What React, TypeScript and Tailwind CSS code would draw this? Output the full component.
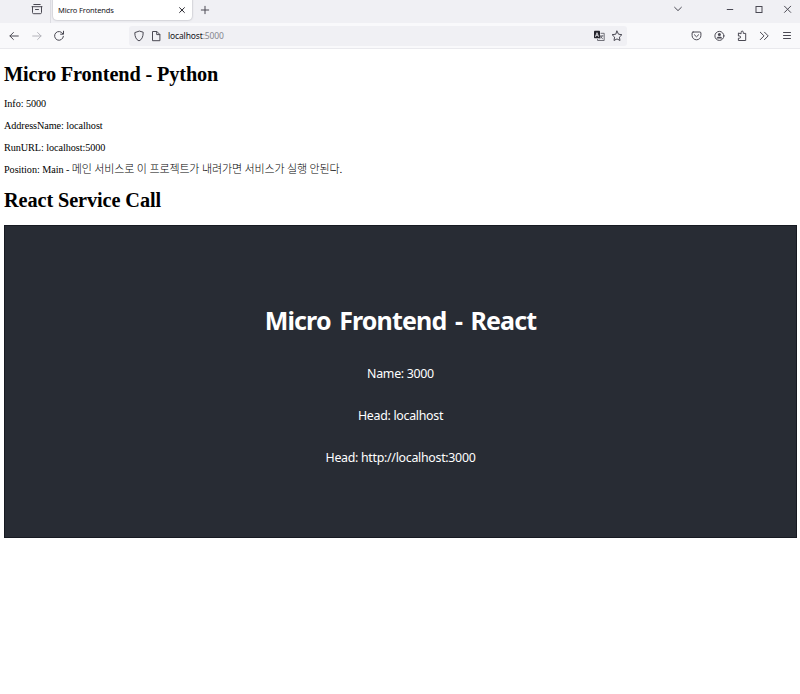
import React from "react";

type IconProps = { className?: string; children: React.ReactNode; size?: number; stroke?: string; width?: number };

function Icon({ className = "", children, size = 12, stroke = "#4a4953", width = 1 }: IconProps) {
  return (
    <svg className={`block shrink-0 ${className}`} width={size} height={size} viewBox="0 0 12 12" fill="none" stroke={stroke} strokeWidth={width} strokeLinecap="round" strokeLinejoin="round">
      {children}
    </svg>
  );
}

function TabBar() {
  return (
    <div className="flex h-[23px] items-start bg-[#f0f0f4]">
      <Icon className="ml-[31px] mt-[3px]">
        <path d="M2.8 1.5h6.4M1 3.7h10M1.5 3.7v5.8a1.2 1.2 0 0 0 1.2 1.2h6.6a1.2 1.2 0 0 0 1.2-1.2V3.7M4.5 6.5h3" />
      </Icon>
      <div className="ml-[7px] h-[23px] w-px bg-[#dcdce2]" />
      <div className="-mt-1 ml-[2px] flex h-6 w-[139px] items-center rounded bg-white pt-[3px] shadow-[0_0_2px_rgba(80,80,95,0.55)]">
        <span className="ml-[5px] whitespace-nowrap font-['Noto_Sans','Open_Sans',sans-serif] text-[7.5px] leading-[12px] tracking-[-0.12px] text-[#15141a]">Micro Frontends</span>
        <Icon className="ml-auto mr-[4px]"><path d="M3.6 3.7l4.8 4.8M8.4 3.7L3.6 8.5" stroke="#25242c" /></Icon>
      </div>
      <Icon className="ml-[7px] mt-[4px]"><path d="M6 2.3v7.4M2.3 6h7.4" /></Icon>
      <Icon className="ml-auto mt-[3px]"><path d="M2.6 4.3L6 7.6l3.4-3.3" /></Icon>
      <Icon className="ml-[40px] mt-[3px]"><path d="M3.2 6.5h5.6" /></Icon>
      <Icon className="ml-[17px] mt-[3px]"><rect x="3" y="3.5" width="6" height="6" strokeLinejoin="miter" /></Icon>
      <Icon className="ml-[17px] mr-[6px] mt-[3px]"><path d="M2.5 3.2l6.2 6.2M8.7 3.2L2.5 9.4" /></Icon>
    </div>
  );
}

function ToolBar() {
  return (
    <div className="flex h-[26px] items-center border-b border-[#e9e9ed] bg-[#f9f9fb]">
      <Icon className="ml-[8px]"><path d="M10.3 6H2M5.4 2.5L1.9 6l3.5 3.5" /></Icon>
      <Icon className="ml-[11px]" stroke="#b4b4bb"><path d="M1.7 6H10M6.6 2.5L10.1 6l-3.5 3.5" /></Icon>
      <Icon className="ml-[10px]"><path d="M9.9 3.8A4.4 4.4 0 1 0 10.4 6.3M10.5 1.2v3H7.6" /></Icon>
      <div className="ml-[64px] flex h-[20px] w-[498px] items-center rounded-[3px] bg-[#f0f0f4]">
        <Icon className="ml-[4px]"><path d="M6 1.2L1.8 2.6c0 4.2 1.3 7.1 4.2 8.3 2.9-1.2 4.2-4.1 4.2-8.3z" /></Icon>
        <Icon className="ml-[5px]"><path d="M2.9 1.5h4l3 3v6.2h-7zM6.7 1.6v3h3" /></Icon>
        <span className="ml-[6px] whitespace-nowrap font-['Noto_Sans','Open_Sans',sans-serif] text-[8.5px] leading-[12px] tracking-[-0.14px] text-[#15141a]">
          localhost<span className="text-[#85858c]">:5000</span>
        </span>
        <Icon className="ml-auto">
          <rect x="1" y="0.8" width="6" height="7.5" rx="0.7" fill="#24232b" stroke="none" />
          <path d="M2.6 6.5L4 2.7l1.4 3.8M3.1 5.3h1.8" stroke="#f0f0f4" strokeWidth="0.8" />
          <path d="M8 3.3h3.2v7.2H4.6V9.3M6.6 8.7l2.8-2.6M6.9 5.9h3.2M7.6 6.3l2 2.6" strokeWidth="0.75" />
        </Icon>
        <Icon className="ml-[6px] mr-[4px]"><path d="M6 1.1l1.5 3.1 3.4.5-2.5 2.4.6 3.4-3-1.6-3 1.6.6-3.4L1.1 4.7l3.4-.5z" /></Icon>
      </div>
      <Icon className="ml-auto"><path d="M3.1 2h6.8a1 1 0 0 1 1 1v2.6a4.4 4.2 0 0 1-8.8 0V3a1 1 0 0 1 1-1zM4.4 4.8l2.1 2 2.1-2" /></Icon>
      <Icon className="ml-[11px]">
        <circle cx="6.4" cy="5.9" r="4.5" />
        <circle cx="6.4" cy="4.6" r="1.5" fill="#4a4953" stroke="none" />
        <path d="M3.6 8.4c.3-1.2 1-1.7 1.8-1.7h2c.8 0 1.5.5 1.8 1.7z" fill="#4a4953" stroke="none" />
      </Icon>
      <Icon className="ml-[11px]"><path d="M5.1 3.4V2.2a1.1 1.1 0 0 1 2.2 0v1.2h2.4v7.1H2.4V8.2h1.1a1.1 1.1 0 0 0 0-2.2H2.4V3.4z" /></Icon>
      <Icon className="ml-[10px]"><path d="M2.3 2.2L6 5.9 2.3 9.6M6.5 2.2l3.7 3.7-3.7 3.7" /></Icon>
      <Icon className="ml-[11px] mr-[7px]"><path d="M2.5 2.5h7M2.5 5.5h7M2.5 8.5h7" /></Icon>
    </div>
  );
}

export default function App() {
  return (
    <div className="flex h-[694px] w-[800px] flex-col overflow-hidden bg-white">
      <TabBar />
      <ToolBar />
      <main className="flex flex-col whitespace-nowrap pl-1 pr-[3px] pt-[13px] font-['Liberation_Serif','Noto_Sans_CJK_KR',serif] text-[10.2px] leading-[12px] tracking-[-0.06px] text-black">
        <h1 className="text-[20.3px] font-bold leading-[24px] tracking-[-0.13px]">Micro Frontend - Python</h1>
        <p className="mt-[12px]">Info: 5000</p>
        <p className="mt-[10px]">AddressName: localhost</p>
        <p className="mt-[10px]">RunURL: localhost:5000</p>
        <p className="mt-[9px]">Position: Main - <span className="font-light tracking-[-0.14px] text-[11px]">메인 서비스로 이 프로젝트가 내려가면 서비스가 실행 안된다.</span></p>
        <h1 className="mt-[12px] text-[20.3px] font-bold leading-[24px] tracking-[-0.1px]">React Service Call</h1>
        <section className="mt-[13px] flex h-[313px] flex-col items-center border border-[#171a22] bg-[#282c34] pt-[76px] font-['Noto_Sans','Open_Sans',sans-serif] text-[12.4px] leading-[18px] tracking-[-0.3px] text-white">
          <h1 className="text-[25px] font-bold leading-[36px] tracking-[-0.85px] [word-spacing:2.8px]">Micro Frontend - React</h1>
          <p className="mt-[27px]">Name: 3000</p>
          <p className="mt-[24px]">Head: localhost</p>
          <p className="mt-[24px]">Head: http://localhost:3000</p>
        </section>
      </main>
    </div>
  );
}
